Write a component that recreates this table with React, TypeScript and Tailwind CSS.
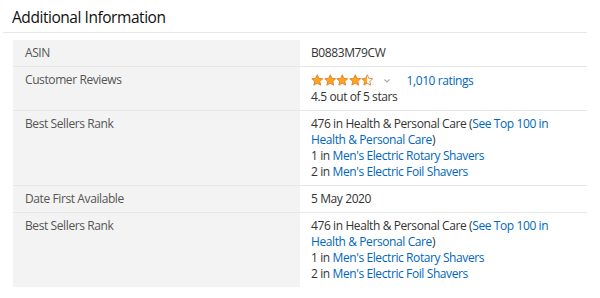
import React from 'react';

type Part = { text: string; link?: boolean };
type Row = { label: string; lines?: Part[][]; reviews?: boolean };

const rank: Part[][] = [
  [{ text: '476 in Health & Personal Care (' }, { text: 'See Top 100 in', link: true }],
  [{ text: 'Health & Personal Care', link: true }, { text: ')' }],
  [{ text: '1 in ' }, { text: "Men's Electric Rotary Shavers", link: true }],
  [{ text: '2 in ' }, { text: "Men's Electric Foil Shavers", link: true }],
];

const rows: Row[] = [
  { label: 'ASIN', lines: [[{ text: 'B0883M79CW' }]] },
  { label: 'Customer Reviews', reviews: true },
  { label: 'Best Sellers Rank', lines: rank },
  { label: 'Date First Available', lines: [[{ text: '5 May 2020' }]] },
  { label: 'Best Sellers Rank', lines: rank },
];

const Star: React.FC<{ half?: boolean }> = ({ half }) => (
  <svg width="12.5" height="12.5" viewBox="0 0 24 24">
    <defs>
      <linearGradient id="half-fill">
        <stop offset="50%" stopColor="#ffa41c" />
        <stop offset="50%" stopColor="#ffffff" />
      </linearGradient>
    </defs>
    <path
      d="M12 1.5l3.1 6.9 7.4.7-5.6 5 1.7 7.4L12 17.6l-6.6 3.9 1.7-7.4-5.6-5 7.4-.7z"
      fill={half ? 'url(#half-fill)' : '#ffa41c'}
      stroke="#de7921"
      strokeWidth="1.6"
      strokeLinejoin="round"
    />
  </svg>
);

const Reviews: React.FC = () => (
  <div>
    <div className="flex items-center h-[17px]">
      <div className="flex">
        <Star />
        <Star />
        <Star />
        <Star />
        <Star half />
      </div>
      <svg className="ml-[9px]" width="8" height="6" viewBox="0 0 8 6">
        <path d="M1.5 1.5l2.5 2.5 2.5-2.5" fill="none" stroke="#aaa" strokeWidth="1.1" />
      </svg>
      <a className="ml-[16px] text-[#0066c0]">1,010 ratings</a>
    </div>
    <div>4.5 out of 5 stars</div>
  </div>
);

export default function App() {
  return (
    <div className="w-[600px] h-[298px] bg-white overflow-hidden font-['Open_Sans',sans-serif] text-[12px] leading-[16px] tracking-[-0.4px] text-[#333]">
      <div className="mx-[3px] mr-[13px] border-b border-[#e7e7e7] pl-[9px] pt-[6px] h-[33px]">
        <h2 className="text-[15.5px] leading-[22px] tracking-[-0.45px] text-[#111]">Additional Information</h2>
      </div>
      <div className="ml-[13px] mr-[13px] mt-[7px]">
        {rows.map((row, i) => (
          <div key={i} className="flex border-b border-[#e7e7e7] last:border-b-0">
            <div className="w-[287px] shrink-0 bg-[#f3f3f3] px-[12px] py-[5px] text-[#555]">{row.label}</div>
            <div className="flex-1 px-[11px] py-[5px]">
              {row.reviews ? (
                <Reviews />
              ) : (
                row.lines!.map((line, j) => (
                  <div key={j}>
                    {line.map((p, k) =>
                      p.link ? (
                        <a key={k} className="text-[#0066c0]">{p.text}</a>
                      ) : (
                        <span key={k}>{p.text}</span>
                      )
                    )}
                  </div>
                ))
              )}
            </div>
          </div>
        ))}
      </div>
    </div>
  );
}
